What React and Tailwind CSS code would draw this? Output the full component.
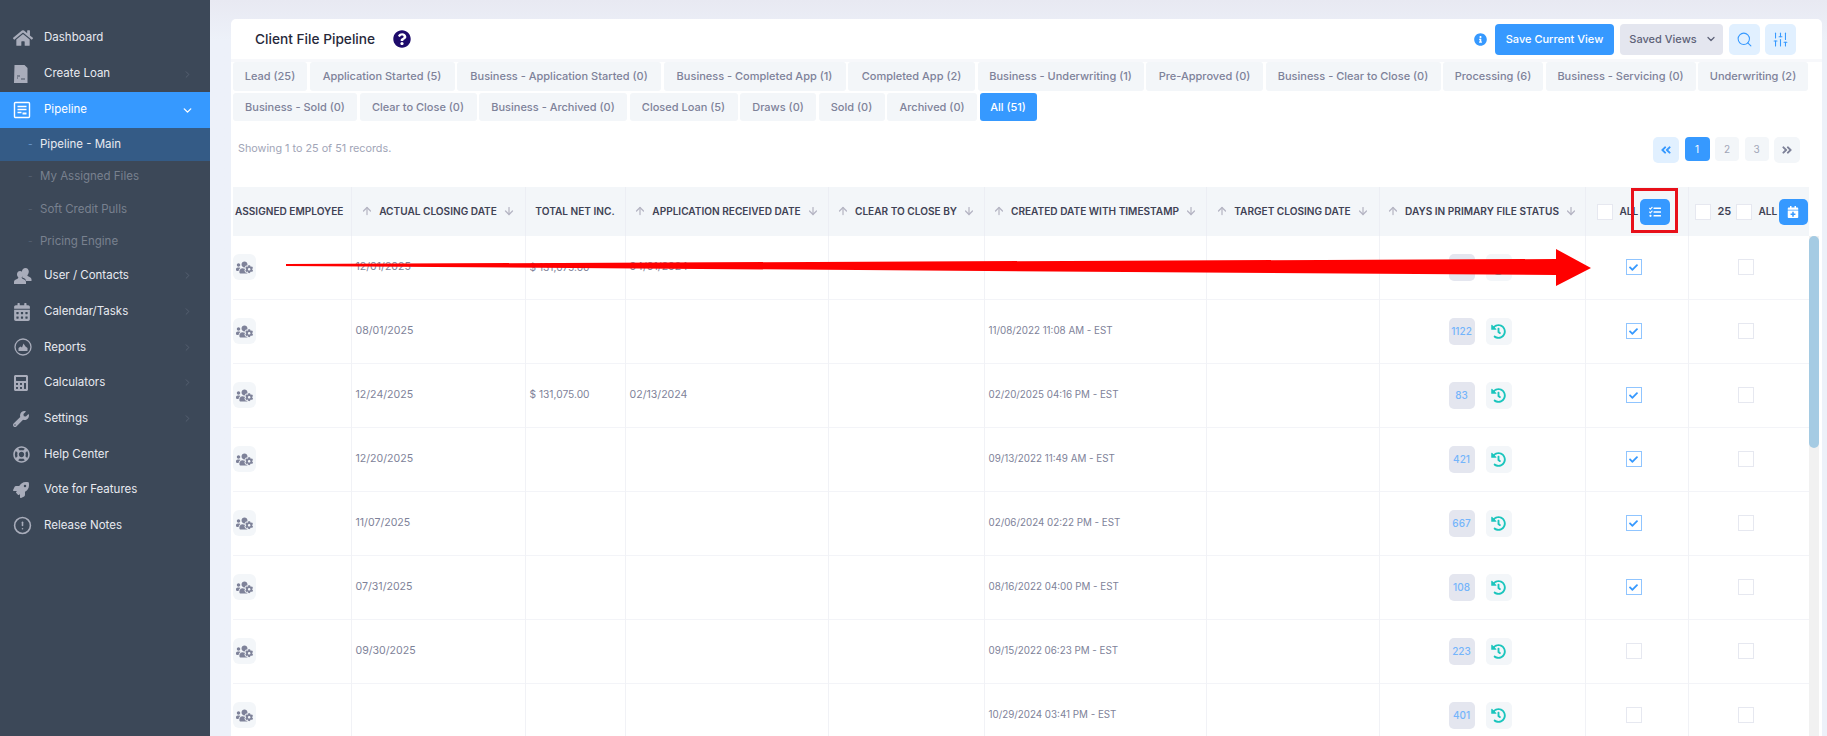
import {
  FaHome, FaCalendarAlt, FaCalculator, FaWrench, FaRegLifeRing, FaRocket,
  FaQuestionCircle, FaInfoCircle, FaAngleDoubleLeft, FaAngleDoubleRight, FaUsersCog, FaHistory,
  FaTasks, FaCalendarPlus, FaCheck,
} from "react-icons/fa";
import { FiAlertCircle } from "react-icons/fi";
import { ArrowUp, ArrowDown, ChevronDown, ChevronRight, Search, SlidersVertical } from "lucide-react";

const DocIcon = () => (
  <svg width="16" height="20" viewBox="0 0 16 20">
    <path d="M1.5 1h10l3 3v15h-13.500z" fill="#a9adbb" />
    <path d="M4 12h3M4 14h1M8 15h4" stroke="#4a5564" strokeWidth="1.200" fill="none" />
  </svg>
);

const ListIcon = () => (
  <svg width="20" height="20" viewBox="0 0 20 20" fill="none" stroke="#fff">
    <rect x="2.500" y="2.500" width="15" height="15" rx="1" strokeWidth="1.400" />
    <path d="M5.500 6.500h9M5.500 9.500h9M5.500 12.500h4" strokeWidth="1.300" />
    <path d="M10.500 13.500h4" strokeWidth="2" />
  </svg>
);

const ReportIcon = () => (
  <svg width="20" height="20" viewBox="0 0 20 20" fill="none">
    <circle cx="10" cy="10" r="8" stroke="#a9adbb" strokeWidth="1.300" />
    <path d="M5.500 14v-3l2-1.500 1.500 1 1.500-4 2 3 2 1.500v3z" fill="#a9adbb" />
  </svg>
);

const UsersIcon = () => (
  <svg width="20" height="20" viewBox="0 0 20 20" fill="#a9adbb">
    <path d="M12.500 2c2 0 3.300 1.600 3.300 3.600 0 1.500-.6 2.800-1.500 3.600.2.800 1 1.200 2.200 1.700 1.200.5 2 1.200 2 2.600V15h-5.500c-.2-1.500-1-2.300-2.300-2.900l-1.500-.7c.1-.7.100-1 0-1.500C8.500 9 8.600 7.400 8.900 5.600 9.200 3.400 10.500 2 12.500 2z" />
    <path d="M7 5c1.800 0 3 1.400 3 3.300 0 1.400-.5 2.500-1.400 3.200.2.900.9 1.300 2 1.800 1.300.6 2.400 1.200 2.400 2.700V18H1v-2c0-1.500 1-2.100 2.400-2.700 1.100-.5 1.800-.9 2-1.800C4.500 10.800 4 9.700 4 8.300 4 6.400 5.200 5 7 5z" />
  </svg>
);

const sideTop = [
  { label: "Dashboard", icon: <FaHome size={20} color="#a9adbb" /> },
  { label: "Create Loan", icon: <DocIcon />, more: true },
];
const sideSub = [
  { label: "Pipeline - Main", active: true },
  { label: "My Assigned Files" },
  { label: "Soft Credit Pulls" },
  { label: "Pricing Engine" },
];
const sideBottom = [
  { label: "User / Contacts", icon: <UsersIcon />, more: true },
  { label: "Calendar/Tasks", icon: <FaCalendarAlt size={18} color="#a9adbb" />, more: true },
  { label: "Reports", icon: <ReportIcon />, more: true },
  { label: "Calculators", icon: <FaCalculator size={16} color="#a9adbb" />, more: true },
  { label: "Settings", icon: <FaWrench size={16} color="#a9adbb" />, more: true },
  { label: "Help Center", icon: <FaRegLifeRing size={17} color="#a9adbb" /> },
  { label: "Vote for Features", icon: <FaRocket size={16} color="#a9adbb" /> },
  { label: "Release Notes", icon: <FiAlertCircle size={19} color="#a9adbb" /> },
];

const tabs1 = [
  ["Lead (25)", "w-[74px]"],
  ["Application Started (5)", "w-[145px]"],
  ["Business - Application Started (0)", "w-[204px]"],
  ["Business - Completed App (1)", "w-[182px]"],
  ["Completed App (2)", "w-[127px]"],
  ["Business - Underwriting (1)", "w-[166px]"],
  ["Pre-Approved (0)", "w-[117px]"],
  ["Business - Clear to Close (0)", "w-[175px]"],
  ["Processing (6)", "w-[100px]"],
  ["Business - Servicing (0)", "w-[150px]"],
  ["Underwriting (2)", "w-[110px]"],
];
const tabs2 = [
  ["Business - Sold (0)", "w-[124px]"],
  ["Clear to Close (0)", "w-[117px]"],
  ["Business - Archived (0)", "w-[148px]"],
  ["Closed Loan (5)", "w-[108px]"],
  ["Draws (0)", "w-[76px]"],
  ["Sold (0)", "w-[66px]"],
  ["Archived (0)", "w-[90px]"],
  ["All (51)", "w-[57px]", true],
];

const rows = [
  { closing: "12/01/2025", net: "$ 131,075.00", received: "04/01/2024", created: "01/24/2024 11:20 AM - EST", days: "1122", a: true },
  { closing: "08/01/2025", created: "11/08/2022 11:08 AM - EST", days: "1122", a: true },
  { closing: "12/24/2025", net: "$ 131,075.00", received: "02/13/2024", created: "02/20/2025 04:16 PM - EST", days: "83", a: true },
  { closing: "12/20/2025", created: "09/13/2022 11:49 AM - EST", days: "421", a: true },
  { closing: "11/07/2025", created: "02/06/2024 02:22 PM - EST", days: "667", a: true },
  { closing: "07/31/2025", created: "08/16/2022 04:00 PM - EST", days: "108", a: true },
  { closing: "09/30/2025", created: "09/15/2022 06:23 PM - EST", days: "223" },
  { created: "10/29/2024 03:41 PM - EST", days: "401" },
  { closing: "", created: "", days: "" },
];

function SideRow({ item, height }) {
  return (
    <div className={`flex items-center ${height}`}>
      <span className="w-[44px] pl-[13px] flex justify-start items-center shrink-0">{item.icon}</span>
      <span className="text-[11.500px] text-[#e8eaf0]">{item.label}</span>
      {item.more && <ChevronRight size={11} className="ml-auto mr-[17px] text-[#566172]" />}
    </div>
  );
}

function Sidebar() {
  return (
    <aside className="w-[210px] shrink-0 h-full bg-[#3c4858] pt-[20px]">
      {sideTop.map((item) => (
        <SideRow key={item.label} item={item} height="h-[36px]" />
      ))}
      <div className="flex items-center h-[36px] bg-[#3699ff]">
        <span className="w-[44px] pl-[12px] shrink-0">
          <ListIcon />
        </span>
        <span className="text-[11.500px] text-white">Pipeline</span>
        <ChevronDown size={13} strokeWidth={2.500} className="ml-auto mr-[16px] text-white" />
      </div>
      {sideSub.map((s) => (
        <div
          key={s.label}
          className={`flex items-center h-[32.500px] pl-[28px] text-[11.500px] ${
            s.active ? "bg-[#345b86] text-[#e8eaf0]" : "text-[#79818f]"
          }`}
        >
          <span className={`w-[12px] text-[10px] ${s.active ? "text-[#6c9cd0]" : "text-[#566172]"}`}>-</span>
          {s.label}
        </div>
      ))}
      {sideBottom.map((item) => (
        <SideRow key={item.label} item={item} height="h-[35.700px]" />
      ))}
    </aside>
  );
}

function CheckBox({ checked }) {
  return (
    <span
      className={`inline-flex align-middle items-center justify-center w-[16px] h-[16px] border-[1.500px] bg-white ${
        checked ? "border-[#90c5ff]" : "border-[#e6e8f0]"
      }`}
    >
      {checked && <FaCheck size={9} color="#3699ff" />}
    </span>
  );
}

function Head({ label }) {
  return (
    <div className="flex items-center justify-center gap-[6px]">
      <ArrowUp size={12} strokeWidth={2.500} className="text-[#b5b5c3] shrink-0" />
      <span>{label}</span>
      <ArrowDown size={12} strokeWidth={2.500} className="text-[#b5b5c3] shrink-0" />
    </div>
  );
}

const th = "border-r border-[#eceef4] p-0 font-semibold";
const td = "border-r border-[#f1f2f6] px-[4px] text-left";

function PipelineTable() {
  return (
    <table className="table-fixed border-collapse w-[1576px] text-[10.600px] text-[#7e8299]">
      <colgroup>
        <col className="w-[118px]" />
        <col className="w-[174px]" />
        <col className="w-[100px]" />
        <col className="w-[203px]" />
        <col className="w-[156px]" />
        <col className="w-[222px]" />
        <col className="w-[173px]" />
        <col className="w-[206px]" />
        <col className="w-[103px]" />
        <col className="w-[121px]" />
      </colgroup>
      <thead>
        <tr className="h-[49px] bg-[#f3f6f9] text-[10.100px] text-[#3f4254] uppercase whitespace-nowrap">
          <th className={`${th} text-left pl-[2px]`}>Assigned Employee</th>
          <th className={th}><Head label="Actual Closing Date" /></th>
          <th className={th}>Total Net Inc.</th>
          <th className={th}><Head label="Application Received Date" /></th>
          <th className={th}><Head label="Clear to Close By" /></th>
          <th className={th}><Head label="Created Date with Timestamp" /></th>
          <th className={th}><Head label="Target Closing Date" /></th>
          <th className={th}><Head label="Days in Primary File Status" /></th>
          <th className={th}>
            <div className="flex items-center pl-[11px]">
              <CheckBox />
              <span className="ml-[7px] w-[20px] text-left">All</span>
              <span className="w-[30px] h-[26px] rounded-[5px] bg-[#3699ff] flex items-center justify-center">
                <FaTasks size={12} color="#fff" />
              </span>
            </div>
          </th>
          <th className="p-0 font-semibold">
            <div className="flex items-center pl-[6px]">
              <CheckBox />
              <span className="ml-[7px] w-[18px] text-[11px] text-left">25</span>
              <CheckBox />
              <span className="ml-[7px] w-[20px] text-left">All</span>
              <span className="w-[29px] h-[26px] rounded-[5px] bg-[#3699ff] flex items-center justify-center">
                <FaCalendarPlus size={12} color="#fff" />
              </span>
            </div>
          </th>
        </tr>
      </thead>
      <tbody>
        {rows.map((r, i) => (
          <tr key={i} className={`border-b border-[#f3f4f8] ${i === 0 ? "h-[63px]" : "h-[64px]"}`}>
            <td className="border-r border-[#f1f2f6] p-0">
              <span className="flex items-center justify-center w-[23px] h-[26px] pr-[1px] rounded-[6px] bg-[#f3f6f9]">
                <FaUsersCog size={17} color="#7e8299" />
              </span>
            </td>
            <td className={td}>{r.closing}</td>
            <td className={`${td} text-[10.200px]`}>{r.net}</td>
            <td className={td}>{r.received}</td>
            <td className={td}></td>
            <td className={`${td} text-[9.800px]`}>{r.created}</td>
            <td className={td}></td>
            <td className="border-r border-[#f1f2f6] p-0 pr-[4px]">
              <div className="flex items-center justify-center gap-[11px]">
                <span className="flex items-center justify-center w-[26px] h-[27px] rounded-[5px] bg-[#e4e6ef] text-[10px] font-medium text-[#74b5fb]">
                  {r.days}
                </span>
                <span className="flex items-center justify-center w-[26px] h-[27px] rounded-[5px] bg-[#f3f6f9]">
                  <FaHistory size={15} color="#1bc5bd" />
                </span>
              </div>
            </td>
            <td className="border-r border-[#f1f2f6] p-0 pr-[6px] text-center">
              <CheckBox checked={r.a} />
            </td>
            <td className="p-0 pr-[5px] text-center">
              <CheckBox />
            </td>
          </tr>
        ))}
      </tbody>
    </table>
  );
}

export default function App() {
  return (
    <div
      className="relative flex w-[1827px] h-[736px] overflow-hidden text-[#3f4254]"
      style={{ fontFamily: "Inter, 'Liberation Sans', sans-serif" }}
    >
      <Sidebar />
      <main className="flex-1 min-w-0 h-full bg-gradient-to-b from-[#e8e9f2] to-[#edf1f9] to-[40px] pl-[21px] pr-[5px] pt-[19px]">
        <div className="h-full flex flex-col bg-white rounded-t-[5px] overflow-hidden">
          <div className="flex items-center h-[43px] shrink-0 border-b-[3px] border-[#f7f8fb]">
            <h1 className="ml-[24px] text-[13.700px] font-medium text-[#27283a]">Client File Pipeline</h1>
            <FaQuestionCircle size={18} color="#1e0b6b" className="ml-[18px]" />
            <FaInfoCircle size={13} color="#3699ff" className="ml-auto mr-[8px]" />
            <button className="w-[119px] h-[31px] rounded-[4px] bg-[#3699ff] text-white text-[11px] font-medium">
              Save Current View
            </button>
            <button className="flex items-center justify-center gap-[8px] ml-[6px] pl-[3px] w-[103px] h-[31px] rounded-[4px] bg-[#e4e6ef] text-[#5e6278] text-[11px] font-medium">
              Saved Views
              <ChevronDown size={12} strokeWidth={2.500} />
            </button>
            <button className="flex items-center justify-center ml-[6px] w-[31px] h-[31px] rounded-[5px] bg-[#e1f0ff]">
              <Search size={17} strokeWidth={1.500} color="#3699ff" />
            </button>
            <button className="flex items-center justify-center ml-[5px] mr-[26px] w-[31px] h-[31px] rounded-[5px] bg-[#e1f0ff]">
              <SlidersVertical size={17} strokeWidth={1.500} color="#3699ff" />
            </button>
          </div>

          <div className="pl-[2px] shrink-0 flex flex-col gap-[2px]">
            <div className="flex gap-[2.500px]">
              {tabs1.map(([t, w]) => (
                <span
                  key={t}
                  className={`flex items-center justify-center h-[29px] rounded-[3px] bg-[#f3f6f9] text-[11px] font-medium text-[#7e8299] whitespace-nowrap ${w}`}
                >
                  {t}
                </span>
              ))}
            </div>
            <div className="flex gap-[2.500px]">
              {tabs2.map(([t, w, active]) => (
                <span
                  key={t}
                  className={`flex items-center justify-center h-[28px] rounded-[3px] text-[11px] font-medium whitespace-nowrap ${w} ${
                    active ? "bg-[#3699ff] text-white" : "bg-[#f3f6f9] text-[#7e8299]"
                  }`}
                >
                  {t}
                </span>
              ))}
            </div>
          </div>

          <div className="flex justify-between h-[66px] shrink-0 pl-[7px] pr-[22px] pt-[16px]">
            <span className="text-[10.800px] text-[#a1a5b7] mt-[4px]">Showing 1 to 25 of 51 records.</span>
            <div className="flex items-start gap-[5.500px] text-[10px] text-[#a1a5b7]">
              <span className="flex items-center justify-center w-[26px] h-[26px] rounded-[5px] bg-[#e1f0ff]">
                <FaAngleDoubleLeft size={12} color="#3699ff" />
              </span>
              <span className="flex items-center justify-center w-[25px] h-[24px] rounded-[4px] bg-[#3699ff] text-white">1</span>
              <span className="flex items-center justify-center w-[24px] h-[24px] rounded-[4px] bg-[#f3f6f9]">2</span>
              <span className="flex items-center justify-center w-[24px] h-[24px] rounded-[4px] bg-[#f3f6f9]">3</span>
              <span className="flex items-center justify-center w-[26px] h-[26px] rounded-[5px] bg-[#f3f6f9]">
                <FaAngleDoubleRight size={12} color="#7e8299" />
              </span>
            </div>
          </div>

          <div className="flex flex-1 min-h-0 pl-[2px] pr-[3px] overflow-hidden">
            <div className="flex-1 min-w-0 overflow-hidden">
              <PipelineTable />
            </div>
            <div className="w-[10px] shrink-0 mt-[49px] bg-[#f1f1f1]">
              <div className="h-[212px] rounded-full bg-[#a5cbe3]" />
            </div>
          </div>
        </div>
      </main>

      {/* annotation drawn over the screenshot */}
      <svg className="absolute inset-0 pointer-events-none" width="1827" height="736">
        <polygon points="286,264 1556,259 1556,249 1591,268 1556,286 1556,275 286,266" fill="#ff0000" />
      </svg>
      <div className="absolute left-[1631px] top-[188px] w-[47px] h-[45px] border-[3px] border-[#e8101a] pointer-events-none" />
    </div>
  );
}
